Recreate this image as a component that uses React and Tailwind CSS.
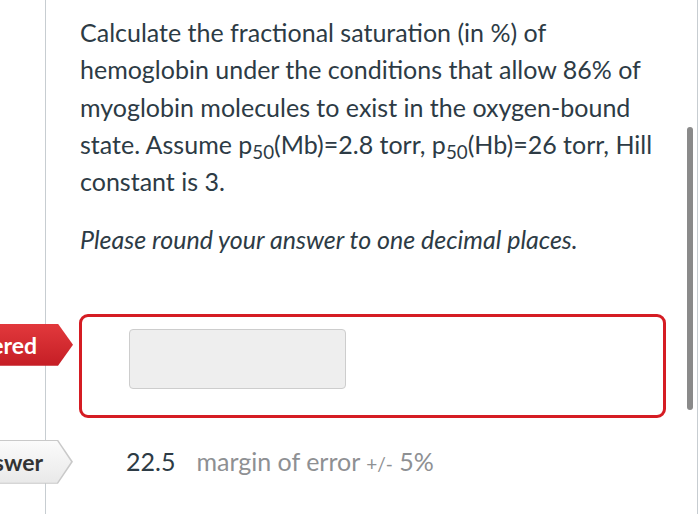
export default function App() {
  return (
    <div className="w-[700px] h-[514px] relative overflow-hidden bg-white font-['Lato','Noto_Sans',sans-serif] text-[#2d3b45]">
      <div className="ml-[45px] mr-[2px] h-full border-l border-r border-[#c7cdd1] relative">
        {/* question */}
        <div className="pl-[34px] pt-[14px] text-[25px] leading-[37.3px]">
          <p>
            Calculate the fractional saturation (in %) of
            <br />
            hemoglobin under the conditions that allow 86% of
            <br />
            myoglobin molecules to exist in the oxygen-bound
            <br />
            state. Assume p<sub>50</sub>(Mb)=2.8 torr, p<sub>50</sub>(Hb)=26 torr, Hill
            <br />
            constant is 3.
          </p>
          <p className="italic mt-[21px]">Please round your answer to one decimal places.</p>
        </div>

        {/* your answer */}
        <div className="relative mt-[55px] pl-[33px] pr-[31px]">
          <div className="absolute left-[-293px] top-[10px] w-[320px] h-[42px] bg-gradient-to-b from-[#e2383c] to-[#c51d25] [clip-path:polygon(0_0,calc(100%-15px)_0,100%_50%,calc(100%-15px)_100%,0_100%)] flex items-center justify-end pr-[36px] text-white font-bold text-[23px] whitespace-nowrap">
            You Answered
          </div>
          <div className="h-[104px] border-[3px] border-[#d51c23] rounded-[9px] pt-[12px] pl-[47px]">
            <div className="w-[217px] h-[60px] bg-[#eeeeee] border border-[#cdcdcd] rounded-[4px]" />
          </div>
        </div>

        {/* correct answer */}
        <div className="relative mt-[22px] h-[44px] flex items-center pl-[80px]">
          <div className="absolute left-[-293px] top-0 w-[320px] h-[44px] bg-[#c9c9c9] [clip-path:polygon(0_0,calc(100%-15px)_0,100%_50%,calc(100%-15px)_100%,0_100%)]">
            <div className="absolute left-0 top-px w-[318px] h-[42px] bg-gradient-to-b from-[#fbfbfb] to-[#e9e9e9] [clip-path:polygon(0_0,calc(100%-14px)_0,100%_50%,calc(100%-14px)_100%,0_100%)] flex items-center justify-end pr-[28px] text-[#333] font-bold text-[23px] whitespace-nowrap">
              Correct Answer
            </div>
          </div>
          <span className="text-[25px] text-[#2d3b45]">22.5</span>
          <span className="ml-[21px] text-[25px] text-[#8e9093]">
            margin of error <span className="text-[19px]">+/-</span> 5%
          </span>
        </div>

        {/* scrollbar */}
        <div className="absolute right-[4px] top-[127px] w-[6px] h-[283px] rounded-full bg-[#8a8a8a]" />
      </div>
    </div>
  );
}
